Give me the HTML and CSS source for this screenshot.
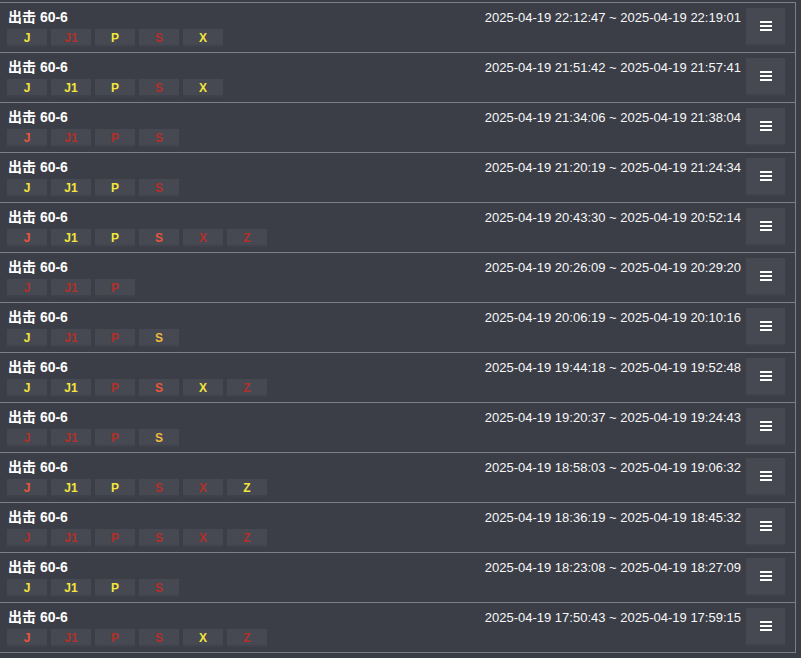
FILE: index.html
```html
<!DOCTYPE html>
<html lang="zh">
<head>
<meta charset="utf-8">
<title>出击记录</title>
<link rel="stylesheet" href="styles.css">
</head>
<body>
<div class="list">
  <div class="row">
    <div class="info"><div class="title">出击 60-6</div>
      <div class="tags"><span class="tag y">J</span><span class="tag r">J1</span><span class="tag y">P</span><span class="tag r">S</span><span class="tag y">X</span></div></div>
    <div class="time">2025-04-19 22:12:47 ~ 2025-04-19 22:19:01</div>
    <button class="menu"><svg width="12" height="10" viewBox="0 0 12 10"><rect y="0" width="12" height="2"/><rect y="4" width="12" height="2"/><rect y="8" width="12" height="2"/></svg></button>
  </div>
  <div class="row">
    <div class="info"><div class="title">出击 60-6</div>
      <div class="tags"><span class="tag y">J</span><span class="tag y">J1</span><span class="tag y">P</span><span class="tag r">S</span><span class="tag y">X</span></div></div>
    <div class="time">2025-04-19 21:51:42 ~ 2025-04-19 21:57:41</div>
    <button class="menu"><svg width="12" height="10" viewBox="0 0 12 10"><rect y="0" width="12" height="2"/><rect y="4" width="12" height="2"/><rect y="8" width="12" height="2"/></svg></button>
  </div>
  <div class="row">
    <div class="info"><div class="title">出击 60-6</div>
      <div class="tags"><span class="tag o">J</span><span class="tag r">J1</span><span class="tag r">P</span><span class="tag r">S</span></div></div>
    <div class="time">2025-04-19 21:34:06 ~ 2025-04-19 21:38:04</div>
    <button class="menu"><svg width="12" height="10" viewBox="0 0 12 10"><rect y="0" width="12" height="2"/><rect y="4" width="12" height="2"/><rect y="8" width="12" height="2"/></svg></button>
  </div>
  <div class="row">
    <div class="info"><div class="title">出击 60-6</div>
      <div class="tags"><span class="tag y">J</span><span class="tag y">J1</span><span class="tag y">P</span><span class="tag r">S</span></div></div>
    <div class="time">2025-04-19 21:20:19 ~ 2025-04-19 21:24:34</div>
    <button class="menu"><svg width="12" height="10" viewBox="0 0 12 10"><rect y="0" width="12" height="2"/><rect y="4" width="12" height="2"/><rect y="8" width="12" height="2"/></svg></button>
  </div>
  <div class="row">
    <div class="info"><div class="title">出击 60-6</div>
      <div class="tags"><span class="tag o">J</span><span class="tag y">J1</span><span class="tag y">P</span><span class="tag o">S</span><span class="tag r">X</span><span class="tag r">Z</span></div></div>
    <div class="time">2025-04-19 20:43:30 ~ 2025-04-19 20:52:14</div>
    <button class="menu"><svg width="12" height="10" viewBox="0 0 12 10"><rect y="0" width="12" height="2"/><rect y="4" width="12" height="2"/><rect y="8" width="12" height="2"/></svg></button>
  </div>
  <div class="row">
    <div class="info"><div class="title">出击 60-6</div>
      <div class="tags"><span class="tag r">J</span><span class="tag r">J1</span><span class="tag r">P</span></div></div>
    <div class="time">2025-04-19 20:26:09 ~ 2025-04-19 20:29:20</div>
    <button class="menu"><svg width="12" height="10" viewBox="0 0 12 10"><rect y="0" width="12" height="2"/><rect y="4" width="12" height="2"/><rect y="8" width="12" height="2"/></svg></button>
  </div>
  <div class="row">
    <div class="info"><div class="title">出击 60-6</div>
      <div class="tags"><span class="tag y">J</span><span class="tag r">J1</span><span class="tag r">P</span><span class="tag g">S</span></div></div>
    <div class="time">2025-04-19 20:06:19 ~ 2025-04-19 20:10:16</div>
    <button class="menu"><svg width="12" height="10" viewBox="0 0 12 10"><rect y="0" width="12" height="2"/><rect y="4" width="12" height="2"/><rect y="8" width="12" height="2"/></svg></button>
  </div>
  <div class="row">
    <div class="info"><div class="title">出击 60-6</div>
      <div class="tags"><span class="tag y">J</span><span class="tag y">J1</span><span class="tag r">P</span><span class="tag o">S</span><span class="tag y">X</span><span class="tag r">Z</span></div></div>
    <div class="time">2025-04-19 19:44:18 ~ 2025-04-19 19:52:48</div>
    <button class="menu"><svg width="12" height="10" viewBox="0 0 12 10"><rect y="0" width="12" height="2"/><rect y="4" width="12" height="2"/><rect y="8" width="12" height="2"/></svg></button>
  </div>
  <div class="row">
    <div class="info"><div class="title">出击 60-6</div>
      <div class="tags"><span class="tag r">J</span><span class="tag r">J1</span><span class="tag r">P</span><span class="tag g">S</span></div></div>
    <div class="time">2025-04-19 19:20:37 ~ 2025-04-19 19:24:43</div>
    <button class="menu"><svg width="12" height="10" viewBox="0 0 12 10"><rect y="0" width="12" height="2"/><rect y="4" width="12" height="2"/><rect y="8" width="12" height="2"/></svg></button>
  </div>
  <div class="row">
    <div class="info"><div class="title">出击 60-6</div>
      <div class="tags"><span class="tag o">J</span><span class="tag y">J1</span><span class="tag y">P</span><span class="tag r">S</span><span class="tag r">X</span><span class="tag y">Z</span></div></div>
    <div class="time">2025-04-19 18:58:03 ~ 2025-04-19 19:06:32</div>
    <button class="menu"><svg width="12" height="10" viewBox="0 0 12 10"><rect y="0" width="12" height="2"/><rect y="4" width="12" height="2"/><rect y="8" width="12" height="2"/></svg></button>
  </div>
  <div class="row">
    <div class="info"><div class="title">出击 60-6</div>
      <div class="tags"><span class="tag r">J</span><span class="tag r">J1</span><span class="tag r">P</span><span class="tag r">S</span><span class="tag r">X</span><span class="tag r">Z</span></div></div>
    <div class="time">2025-04-19 18:36:19 ~ 2025-04-19 18:45:32</div>
    <button class="menu"><svg width="12" height="10" viewBox="0 0 12 10"><rect y="0" width="12" height="2"/><rect y="4" width="12" height="2"/><rect y="8" width="12" height="2"/></svg></button>
  </div>
  <div class="row">
    <div class="info"><div class="title">出击 60-6</div>
      <div class="tags"><span class="tag y">J</span><span class="tag y">J1</span><span class="tag y">P</span><span class="tag r">S</span></div></div>
    <div class="time">2025-04-19 18:23:08 ~ 2025-04-19 18:27:09</div>
    <button class="menu"><svg width="12" height="10" viewBox="0 0 12 10"><rect y="0" width="12" height="2"/><rect y="4" width="12" height="2"/><rect y="8" width="12" height="2"/></svg></button>
  </div>
  <div class="row">
    <div class="info"><div class="title">出击 60-6</div>
      <div class="tags"><span class="tag o">J</span><span class="tag r">J1</span><span class="tag r">P</span><span class="tag r">S</span><span class="tag y">X</span><span class="tag r">Z</span></div></div>
    <div class="time">2025-04-19 17:50:43 ~ 2025-04-19 17:59:15</div>
    <button class="menu"><svg width="12" height="10" viewBox="0 0 12 10"><rect y="0" width="12" height="2"/><rect y="4" width="12" height="2"/><rect y="8" width="12" height="2"/></svg></button>
  </div>
</div>
</body>
</html>
```

FILE: styles.css
```css
html, body {
  margin: 0;
  padding: 0;
  background: #3a3d46;
}
body {
  padding-top: 2px;
  font-family: "Liberation Sans", Arial, "Noto Sans CJK SC", sans-serif;
  color: #f2f2f2;
}
.list {
  width: 795px;
  border-top: 1px solid #7c7f86;
  border-right: 1px solid #7c7f86;
}
.row {
  display: flex;
  align-items: flex-start;
  height: 50px;
  box-sizing: border-box;
  padding: 5px 10px 0 7px;
  border-bottom: 1px solid #7c7f86;
  background: #3b3e47;
}
.info {
  flex: 1;
  min-width: 0;
}
.title {
  margin-top: 1px;
  padding-left: 1px;
  font-family: "Liberation Sans", Arial, "Noto Sans CJK SC", sans-serif;
  font-size: 14px;
  font-weight: bold;
  line-height: 16px;
  color: #ffffff;
}
.tags {
  display: flex;
  gap: 4px;
  margin-top: 4px;
}
.tag {
  display: flex;
  align-items: center;
  justify-content: center;
  width: 40px;
  height: 18px;
  box-sizing: border-box;
  padding-top: 1px;
  background: #464951;
  border-bottom: 2px solid #3f424a;
  font-size: 12px;
  font-weight: bold;
  line-height: 14px;
}
.tag.y { color: #f3e53c; }
.tag.r { color: #b3302a; }
.tag.o { color: #ea5539; }
.tag.g { color: #f2b93a; }
.time {
  margin-top: 2px;
  font-size: 13px;
  line-height: 15px;
  color: #f7f7f7;
  white-space: nowrap;
}
.menu {
  display: flex;
  align-items: center;
  justify-content: center;
  width: 39px;
  height: 38px;
  margin: 0 0 0 5px;
  padding: 0;
  box-sizing: border-box;
  background: #464951;
  border: none;
  border-bottom: 2px solid #3f424a;
  border-radius: 0;
}
.menu svg {
  display: block;
  fill: #ffffff;
}
```
